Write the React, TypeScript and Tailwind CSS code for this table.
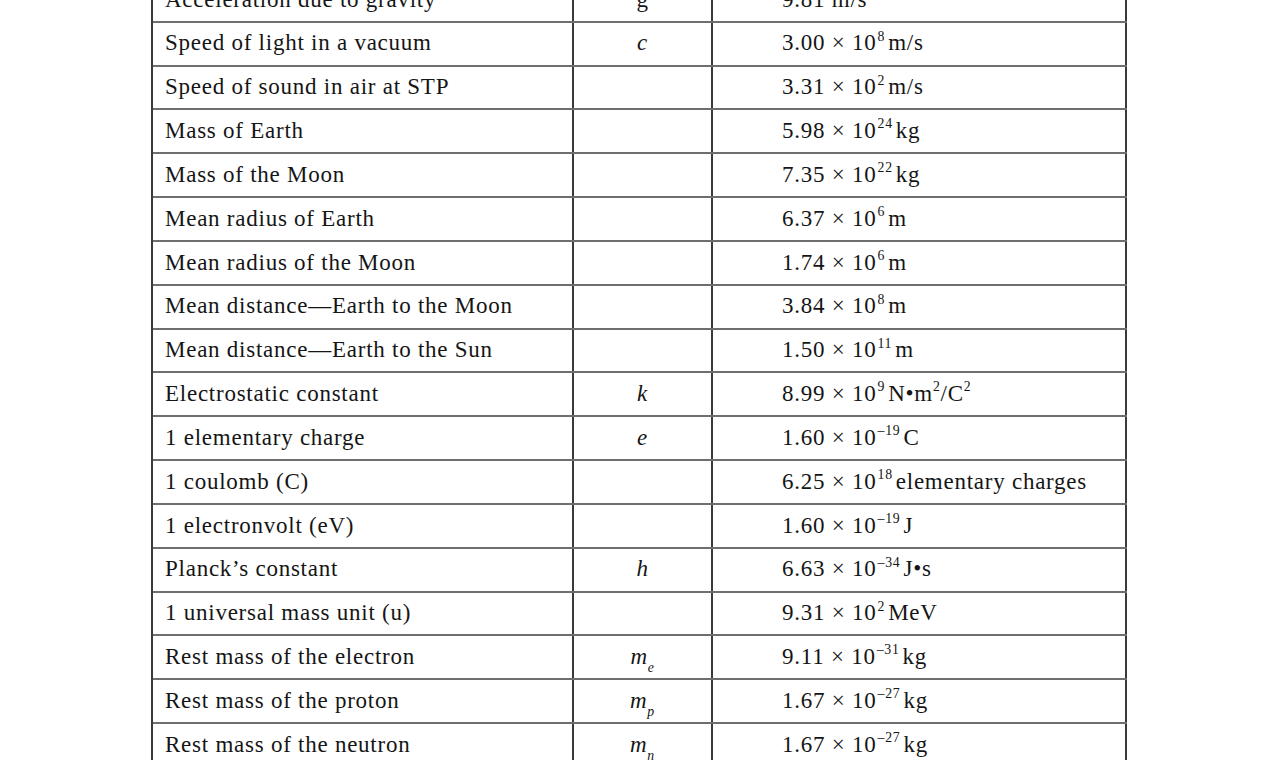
import React from "react";

type Row = { name: string; sym?: React.ReactNode; val: React.ReactNode };

const Sup = ({ children }: { children: React.ReactNode }) => (
  <sup className="text-[0.6em] top-[-0.7em] ml-[1px] mr-[3px]">{children}</sup>
);

const Sym = ({ b, s }: { b: string; s: string }) => (
  <span className="italic">
    {b}
    <sub className="text-[0.6em] bottom-[-0.6em]">{s}</sub>
  </span>
);

const v = (m: string, e: string, unit: React.ReactNode) => (
  <>
    {m} × 10
    <Sup>{e}</Sup>
    {unit}
  </>
);

const rows: Row[] = [
  { name: "Acceleration due to gravity", sym: <span>g</span>, val: <>9.81 m/s<Sup>2</Sup></> },
  { name: "Speed of light in a vacuum", sym: <span className="italic">c</span>, val: v("3.00", "8", "m/s") },
  { name: "Speed of sound in air at STP", val: v("3.31", "2", "m/s") },
  { name: "Mass of Earth", val: v("5.98", "24", "kg") },
  { name: "Mass of the Moon", val: v("7.35", "22", "kg") },
  { name: "Mean radius of Earth", val: v("6.37", "6", "m") },
  { name: "Mean radius of the Moon", val: v("1.74", "6", "m") },
  { name: "Mean distance—Earth to the Moon", val: v("3.84", "8", "m") },
  { name: "Mean distance—Earth to the Sun", val: v("1.50", "11", "m") },
  {
    name: "Electrostatic constant",
    sym: <span className="italic">k</span>,
    val: v("8.99", "9", <>N•m<sup className="text-[0.6em] top-[-0.7em]">2</sup>/C<sup className="text-[0.6em] top-[-0.7em]">2</sup></>),
  },
  { name: "1 elementary charge", sym: <span className="italic">e</span>, val: v("1.60", "–19", "C") },
  { name: "1 coulomb (C)", val: v("6.25", "18", "elementary charges") },
  { name: "1 electronvolt (eV)", val: v("1.60", "–19", "J") },
  { name: "Planck’s constant", sym: <span className="italic">h</span>, val: v("6.63", "–34", "J•s") },
  { name: "1 universal mass unit (u)", val: v("9.31", "2", "MeV") },
  { name: "Rest mass of the electron", sym: <Sym b="m" s="e" />, val: v("9.11", "–31", "kg") },
  { name: "Rest mass of the proton", sym: <Sym b="m" s="p" />, val: v("1.67", "–27", "kg") },
  { name: "Rest mass of the neutron", sym: <Sym b="m" s="n" />, val: v("1.67", "–27", "kg") },
];

export default function App() {
  return (
    <div
      className="w-[1278px] h-[760px] overflow-hidden bg-white text-[#151515]"
      style={{ fontFamily: '"Liberation Serif", "Times New Roman", serif' }}
    >
      <div className="ml-[151px] mt-[-21px] w-[976px] border-l-2 border-[#3a3a3a] text-[23px] tracking-[0.75px]">
        {rows.map((r, i) => (
          <div
            key={i}
            className="grid grid-cols-[421px_139px_414px] h-[43.83px] border-b-2 border-[#6e6e6e]"
          >
            <div className="border-r-2 border-[#3a3a3a] pl-3 flex items-center whitespace-nowrap">
              {r.name}
            </div>
            <div className="border-r-2 border-[#3a3a3a] flex items-center justify-center">
              {r.sym}
            </div>
            <div className="border-r-2 border-[#3a3a3a] pl-[69px] flex items-center whitespace-nowrap">
              <span>{r.val}</span>
            </div>
          </div>
        ))}
      </div>
    </div>
  );
}
